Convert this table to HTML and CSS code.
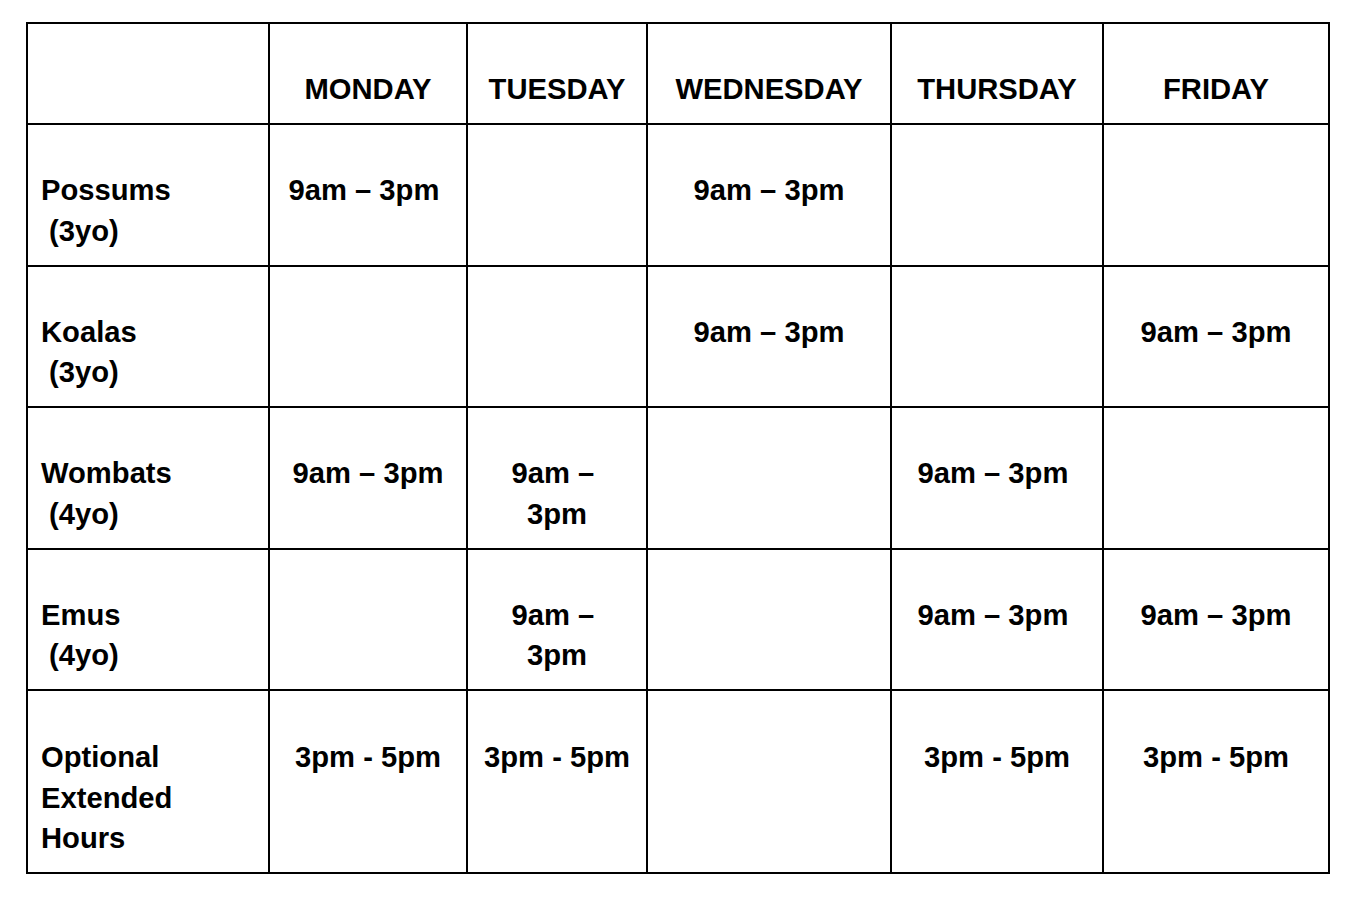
FILE: index.html
```html
<!DOCTYPE html>
<html>
<head>
<meta charset="utf-8">
<link rel="stylesheet" href="styles.css">
</head>
<body>
<table class="schedule">
  <colgroup>
    <col class="c0"><col class="c1"><col class="c2"><col class="c3"><col class="c4"><col class="c5">
  </colgroup>
  <tr class="head">
    <td class="label"></td>
    <td>MONDAY</td>
    <td>TUESDAY</td>
    <td>WEDNESDAY</td>
    <td>THURSDAY</td>
    <td>FRIDAY</td>
  </tr>
  <tr>
    <td class="label">Possums<br>&nbsp;(3yo)</td>
    <td>9am – 3pm&nbsp;</td>
    <td></td>
    <td>9am – 3pm</td>
    <td></td>
    <td></td>
  </tr>
  <tr>
    <td class="label">Koalas<br>&nbsp;(3yo)</td>
    <td></td>
    <td></td>
    <td>9am – 3pm</td>
    <td></td>
    <td>9am – 3pm</td>
  </tr>
  <tr>
    <td class="label">Wombats<br>&nbsp;(4yo)</td>
    <td>9am – 3pm</td>
    <td>9am –&nbsp;<br>3pm</td>
    <td></td>
    <td>9am – 3pm&nbsp;</td>
    <td></td>
  </tr>
  <tr>
    <td class="label">Emus<br>&nbsp;(4yo)</td>
    <td></td>
    <td>9am –&nbsp;<br>3pm</td>
    <td></td>
    <td>9am – 3pm&nbsp;</td>
    <td>9am – 3pm</td>
  </tr>
  <tr class="ext">
    <td class="label">Optional Extended Hours</td>
    <td>3pm - 5pm</td>
    <td>3pm - 5pm</td>
    <td></td>
    <td>3pm - 5pm</td>
    <td>3pm - 5pm</td>
  </tr>
</table>
</body>
</html>
```
FILE: styles.css
```css
html, body {
  margin: 0;
  padding: 0;
  background: #ffffff;
}

body {
  padding: 22px 0 0 26px;
  font-family: "Liberation Sans", Arial, sans-serif;
  color: #000000;
}

.schedule {
  border-collapse: collapse;
  table-layout: fixed;
  width: 1302px;
  border: 2px solid #000;
}

.c0 { width: 242px; }
.c1 { width: 198px; }
.c2 { width: 180px; }
.c3 { width: 244px; }
.c4 { width: 212px; }
.c5 { width: 226px; }

.schedule td {
  border: 2px solid #000;
  padding: 45px 14px 14px 14px;
  vertical-align: top;
  text-align: center;
  font-weight: bold;
  font-size: 29.2px;
  line-height: 40.25px;
}

.schedule .ext td {
  padding-top: 46px;
  padding-bottom: 14px;
}

.schedule td.label {
  text-align: left;
  padding-left: 13px;
}
```
